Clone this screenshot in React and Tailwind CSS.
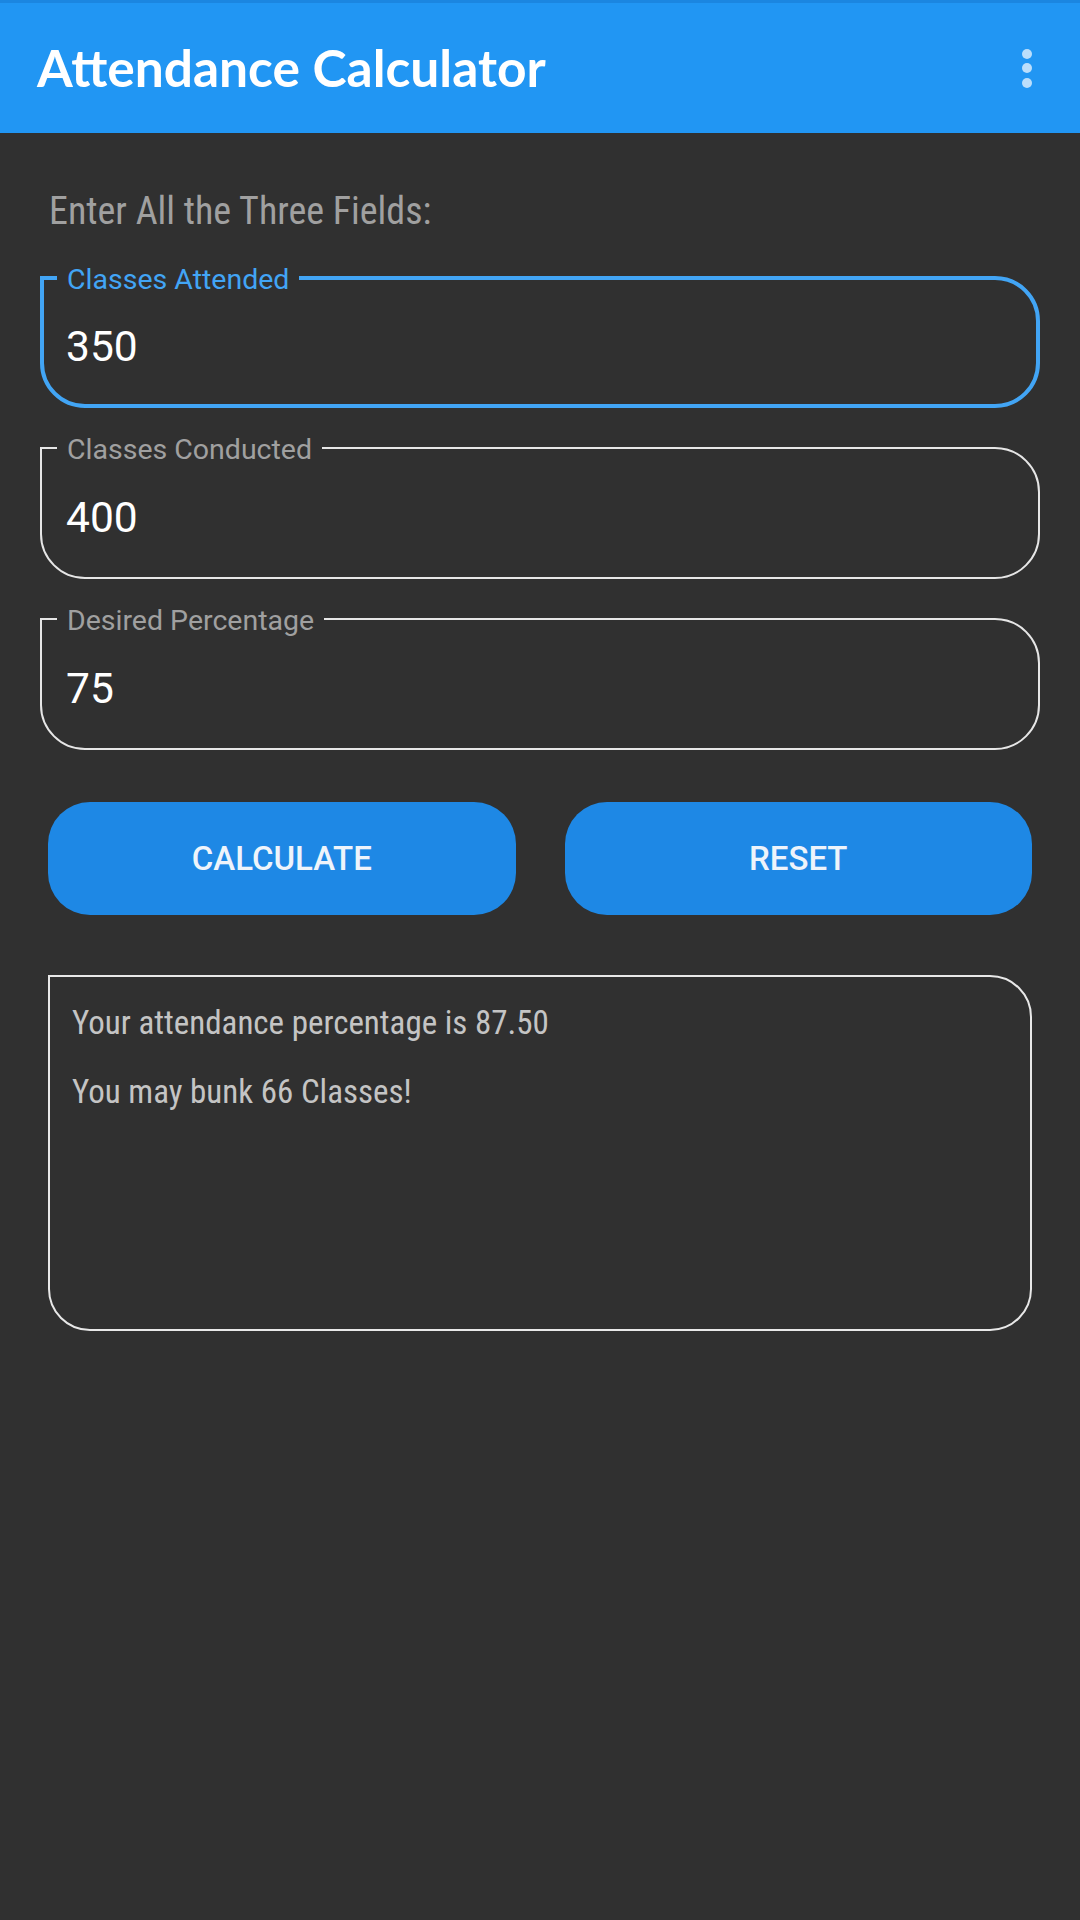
import React from "react";

const roboto = "font-['Roboto',sans-serif]";
const condensed = "font-['Roboto_Condensed','Roboto',sans-serif] font-stretch-condensed";

function Field({ label, value, focused }) {
  return (
    <div
      className={
        "relative h-[132px] rounded-[45px] rounded-tl-none flex items-center pt-[10px] " +
        (focused
          ? "border-[4px] border-[#42a5f5] pl-[22px]"
          : "border-[2px] border-[#e6e6e6] pl-[24px]")
      }
    >
      <span
        className={
          "absolute -translate-y-1/2 bg-[#303030] px-[10px] text-[28.5px] leading-none " +
          roboto +
          (focused ? " top-[0px] left-[13px] text-[#42a5f5]" : " top-[1px] left-[15px] text-[#a0a0a0]")
        }
      >
        {label}
      </span>
      <span className={"text-[42.5px] leading-none text-white " + roboto}>{value}</span>
    </div>
  );
}

export default function App() {
  return (
    <div className="w-[1080px] min-h-[1920px] bg-[#303030] flex flex-col">
      <header className="h-[133px] bg-[#2196f3] border-t-[3px] border-[#1b86e0] flex items-center justify-between pl-[37px] pr-[48px]">
        <h1 className="font-['Lato',sans-serif] font-bold text-[51.5px] leading-none text-white">
          Attendance Calculator
        </h1>
        <div className="flex flex-col gap-[4.5px]">
          <span className="block w-[10px] h-[10px] rounded-full bg-[#bbdefb]" />
          <span className="block w-[10px] h-[10px] rounded-full bg-[#bbdefb]" />
          <span className="block w-[10px] h-[10px] rounded-full bg-[#bbdefb]" />
        </div>
      </header>

      <main className="flex flex-col">
        <p className={"mt-[59px] pl-[49px] text-[38px] leading-none text-[#a0a0a0] " + condensed}>
          Enter All the Three Fields:
        </p>

        <div className="mt-[46px] px-[40px] flex flex-col gap-[39px]">
          <Field label="Classes Attended" value="350" focused />
          <Field label="Classes Conducted" value="400" />
          <Field label="Desired Percentage" value="75" />
        </div>

        <div className="mt-[52px] px-[48px] grid grid-cols-2 gap-[49px]">
          <button className={"h-[113px] rounded-[42px] bg-[#1e88e5] text-[#eef4fb] text-[33px] font-medium " + roboto}>
            CALCULATE
          </button>
          <button className={"h-[113px] rounded-[42px] bg-[#1e88e5] text-[#eef4fb] text-[33px] font-medium " + roboto}>
            RESET
          </button>
        </div>

        <div className="mt-[60px] mx-[48px] h-[356px] border-[2px] border-[#e8e8e8] rounded-[42px] rounded-tl-none pt-[29px] pl-[22px] flex flex-col gap-[36px]">
          <p className={"text-[33px] leading-none text-[#c4c4c4] " + condensed}>
            Your attendance percentage is 87.50
          </p>
          <p className={"text-[33px] leading-none text-[#c4c4c4] " + condensed}>
            You may bunk 66 Classes!
          </p>
        </div>
      </main>
    </div>
  );
}
